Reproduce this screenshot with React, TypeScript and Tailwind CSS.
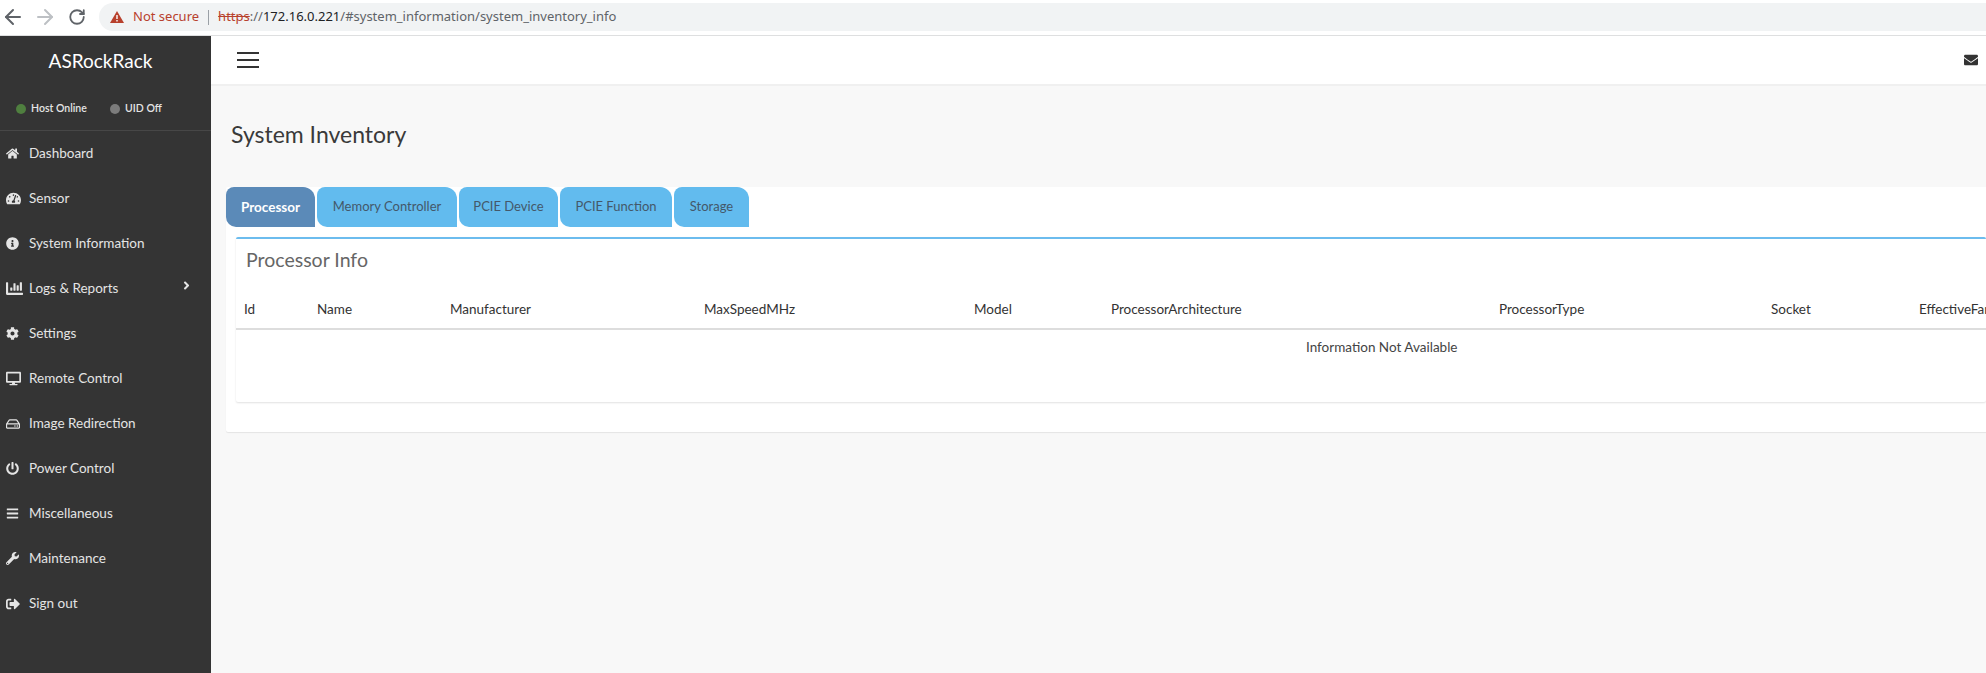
import { ArrowLeft, ArrowRight, RotateCw } from "lucide-react";
import {
  FaAngleRight,
  FaBars,
  FaChartBar,
  FaCog,
  FaDesktop,
  FaEnvelope,
  FaHome,
  FaInfoCircle,
  FaPowerOff,
  FaRegHdd,
  FaSignOutAlt,
  FaTachometerAlt,
  FaWrench,
} from "react-icons/fa";

const menu = [
  { label: "Dashboard", icon: <FaHome size={13} /> },
  { label: "Sensor", icon: <FaTachometerAlt size={15} /> },
  { label: "System Information", icon: <FaInfoCircle size={13} /> },
  { label: "Logs & Reports", icon: <FaChartBar size={17} />, arrow: true },
  { label: "Settings", icon: <FaCog size={13} /> },
  { label: "Remote Control", icon: <FaDesktop size={15} /> },
  { label: "Image Redirection", icon: <FaRegHdd size={14} /> },
  { label: "Power Control", icon: <FaPowerOff size={13} /> },
  { label: "Miscellaneous", icon: <FaBars size={13} /> },
  { label: "Maintenance", icon: <FaWrench size={13} /> },
  { label: "Sign out", icon: <FaSignOutAlt size={14} /> },
];

const tabs = [
  { label: "Processor", width: "w-[89px]", active: true },
  { label: "Memory Controller", width: "w-[140px]" },
  { label: "PCIE Device", width: "w-[99px]" },
  { label: "PCIE Function", width: "w-[112px]" },
  { label: "Storage", width: "w-[75px]" },
];

const columns = [
  { label: "Id", width: "w-[73px]" },
  { label: "Name", width: "w-[133px]" },
  { label: "Manufacturer", width: "w-[254px]" },
  { label: "MaxSpeedMHz", width: "w-[270px]" },
  { label: "Model", width: "w-[137px]" },
  { label: "ProcessorArchitecture", width: "w-[388px]" },
  { label: "ProcessorType", width: "w-[272px]" },
  { label: "Socket", width: "w-[148px]" },
  { label: "EffectiveFamily", width: "w-[160px]" },
];

function BrowserBar() {
  return (
    <div className="flex h-[36px] shrink-0 items-start border-b border-[#dedfe0] bg-white pt-[3px] font-['Noto_Sans',sans-serif]">
      <div className="flex h-[28px] w-[99px] shrink-0 items-center gap-[8px] pl-[1px] text-[#5f6368]">
        <ArrowLeft size={24} strokeWidth={2} />
        <ArrowRight size={24} strokeWidth={2} className="text-[#bdc0c4]" />
        <span className="flex size-[24px] items-center justify-center">
          <RotateCw size={18} strokeWidth={2.4} />
        </span>
      </div>
      <div className="flex h-[28px] flex-1 items-center rounded-l-full bg-[#f1f3f4] pl-[11px] text-[13px] text-[#5f6368]">
        <svg width="14" height="12" viewBox="0 0 14 12" className="shrink-0">
          <path d="M7 0 14 12H0Z" fill="#b8412d" />
          <path d="M6.3 4h1.4v4H6.3zM6.3 9h1.4v1.5H6.3z" fill="#fff" />
        </svg>
        <span className="ml-[9px] text-[#b8412d]">Not secure</span>
        <span className="mx-[9px] h-[15px] w-px bg-[#9aa0a6]" />
        <span className="text-[#b8412d] line-through">https</span>
        <span>://</span>
        <span className="text-[#202124]">172.16.0.221</span>
        <span>/#system_information/system_inventory_info</span>
      </div>
    </div>
  );
}

function Sidebar() {
  return (
    <aside className="flex w-[211px] shrink-0 flex-col bg-[#343434] text-[#e4e4e4]">
      <div className="flex h-[51px] items-center justify-center pr-[10px] text-[19px] text-white">
        ASRockRack
      </div>
      <div className="flex h-[44px] items-center border-b border-[#474747] pl-[16px] text-[10.5px] font-semibold whitespace-nowrap">
        <span className="size-[10px] rounded-full bg-[#4f7f3f]" />
        <span className="ml-[5px] w-[54px]">Host Online</span>
        <span className="ml-[25px] size-[10px] rounded-full bg-[#7c7c7c]" />
        <span className="ml-[5px]">UID Off</span>
      </div>
      <nav className="flex flex-col">
        {menu.map((item) => (
          <div key={item.label} className="flex h-[45px] items-center pl-[6px] text-[13.5px]">
            <span className="flex w-[23px] shrink-0 items-center">{item.icon}</span>
            <span>{item.label}</span>
            {item.arrow ? <FaAngleRight size={13} className="ml-auto mr-[18px] -mt-[6px]" /> : null}
          </div>
        ))}
      </nav>
    </aside>
  );
}

function Content() {
  return (
    <main className="flex min-w-0 flex-1 flex-col bg-[#f8f8f8]">
      <header className="flex h-[50px] shrink-0 items-center justify-between border-b-2 border-[#f0f0f0] bg-white pl-[26px] pr-[8px]">
        <div className="flex w-[22px] flex-col gap-[5px]">
          <span className="h-[2px] bg-[#333]" />
          <span className="h-[2px] bg-[#333]" />
          <span className="h-[2px] bg-[#333]" />
        </div>
        <FaEnvelope size={14} className="text-[#333]" />
      </header>
      <h1 className="pl-[20px] pt-[33px] text-[23px] leading-[30px] text-[#3a3a3a]">System Inventory</h1>
      <section className="ml-[15px] mt-[38px] h-[245px] w-[1800px] rounded-[2px] bg-white pr-[40px] shadow-[0_1px_1px_rgba(0,0,0,0.08)]">
        <div className="flex h-[40px] gap-[2px]">
          {tabs.map((tab) => (
            <div
              key={tab.label}
              className={
                tab.active
                  ? `${tab.width} flex items-center justify-center rounded-tl-[8px] rounded-tr-[12px] rounded-bl-[10px] bg-[#5b8ab8] text-[13.5px] font-bold text-white`
                  : `${tab.width} flex items-center justify-center rounded-tl-[8px] rounded-tr-[12px] rounded-bl-[10px] bg-[#62bbee] text-[13px] text-[#44586a]`
              }
            >
              {tab.label}
            </div>
          ))}
        </div>
        <div className="ml-[10px] mt-[10px] h-[165px] overflow-hidden rounded-[2px] border-t-2 border-[#6cbcee] bg-white shadow-[0_1px_2px_rgba(0,0,0,0.12)]">
          <h2 className="pl-[10px] pt-[7px] text-[19.5px] leading-[28px] text-[#666]">Processor Info</h2>
          <table className="mt-[15px] w-[1800px] table-fixed border-collapse text-[13.5px] text-[#333]">
            <thead>
              <tr className="h-[40px] border-b-2 border-[#dddddd]">
                {columns.map((col) => (
                  <th key={col.label} className={`${col.width} pl-[8px] pt-[2px] text-left font-normal`}>
                    {col.label}
                  </th>
                ))}
              </tr>
            </thead>
            <tbody>
              <tr>
                <td colSpan={9} className="h-[36px] pl-[1070px] text-[#444]">
                  Information Not Available
                </td>
              </tr>
            </tbody>
          </table>
        </div>
      </section>
    </main>
  );
}

export default function App() {
  return (
    <div className="flex h-[673px] w-[1986px] flex-col overflow-hidden bg-white font-['Lato',sans-serif]">
      <BrowserBar />
      <div className="flex min-h-0 flex-1">
        <Sidebar />
        <Content />
      </div>
    </div>
  );
}
